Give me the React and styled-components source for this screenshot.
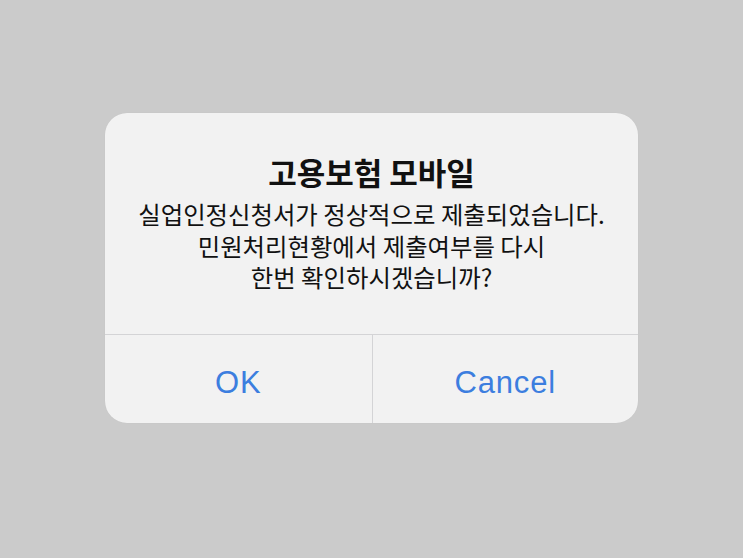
import React from "react";
import styled, { createGlobalStyle } from "styled-components";

const GlobalStyle = createGlobalStyle`
	html, body {
		margin: 0;
		padding: 0;
		background: #cbcbcb;
	}
	body {
		font-family: "Noto Sans CJK KR", "Noto Sans", sans-serif;
	}
`;

const Screen = styled.div`
	width: 743px;
	height: 558px;
	background: #cbcbcb;
	overflow: hidden;
	padding-top: 113px;
	box-sizing: border-box;
`;

const Dialog = styled.div`
	width: 533px;
	height: 310px;
	margin: 0 auto;
	background: #f2f2f2;
	border-radius: 22px;
	display: flex;
	flex-direction: column;
	overflow: hidden;
	box-shadow: 0 0 1px rgba(0, 0, 0, 0.08);
`;

const Content = styled.div`
	height: 222px;
	box-sizing: border-box;
	padding-top: 40px;
	text-align: center;
	color: #111111;
	border-bottom: 1px solid #d4d4d6;
`;

const Title = styled.h1`
	margin: 0;
	font-size: 31px;
	line-height: 38px;
	font-weight: 700;
`;

const Message = styled.p`
	margin: 7px 0 0;
	font-size: 24.4px;
	line-height: 31.5px;
	font-weight: 400;
`;

const ButtonRow = styled.div`
	flex: 1;
	display: grid;
	grid-template-columns: 1fr 1fr;
`;

const ActionButton = styled.button`
	border: none;
	background: transparent;
	padding: 7px 0 0;
	margin: 0;
	font-family: "Liberation Sans", Arial, sans-serif;
	font-size: 31px;
	letter-spacing: 0.8px;
	color: #3c7edf;
	cursor: pointer;
	border-left: ${(props) => (props.divided ? "1px solid #d4d4d6" : "none")};
`;

export default function App() {
	return (
		<>
			<GlobalStyle />
			<Screen>
				<Dialog>
					<Content>
						<Title>고용보험 모바일</Title>
						<Message>
							실업인정신청서가 정상적으로 제출되었습니다.
							<br />
							민원처리현황에서 제출여부를 다시
							<br />
							한번 확인하시겠습니까?
						</Message>
					</Content>
					<ButtonRow>
						<ActionButton>OK</ActionButton>
						<ActionButton divided>Cancel</ActionButton>
					</ButtonRow>
				</Dialog>
			</Screen>
		</>
	);
}
